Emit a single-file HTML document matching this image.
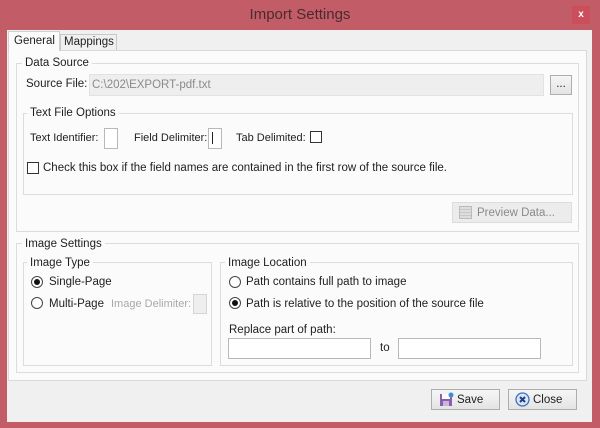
<!DOCTYPE html>
<html><head><style>
*{margin:0;padding:0;box-sizing:border-box}
body{width:600px;height:428px;background:#c25d68;font-family:"Liberation Sans",sans-serif;font-size:11.5px;color:#1e1e1e;position:relative;overflow:hidden}
.a{position:absolute}
.title{left:0;top:0;width:600px;height:30px;text-align:center;line-height:30px;font-size:15px;color:#4a2a2e}
.x{left:572px;top:6px;width:18px;height:18px;background:#cc4e5a;color:#fff;font-weight:bold;font-size:10px;text-align:center;line-height:18px}
.client{left:7px;top:30px;width:585px;height:392px;background:#f0f0f0}
.page{left:8px;top:50px;width:579px;height:331px;background:#fbfbfb;border:1px solid #d9d9d9}
.grp{border:1px solid #dcdcdc}
.lbl{background:#fbfbfb;padding:0 3px;white-space:nowrap}
.tb{background:#fff;border:1px solid #b8b8b8}
.btn{background:linear-gradient(#f6f6f6,#e4e4e4);border:1px solid #adadad;text-align:center}
.cb{width:12px;height:12px;border:1px solid #333;background:#fff}
.rd{width:12px;height:12px;border:1px solid #444;border-radius:50%;background:#fff}
.rd.on::after{content:"";position:absolute;left:2px;top:2px;width:6px;height:6px;border-radius:50%;background:#111}
.t{white-space:nowrap;line-height:14px}
.s{font-size:11px}
</style></head><body>
<div class="a title">Import Settings</div>
<div class="a x">x</div>
<div class="a client"></div>
<div class="a page"></div>
<div class="a" style="left:8px;top:31px;width:52px;height:20px;background:#fbfbfb;border:1px solid #d0d0d0;border-bottom:none"></div>
<div class="a t" style="left:14px;top:34px">General</div>
<div class="a" style="left:60px;top:34px;width:57px;height:16px;background:#f0f0f0;border:1px solid #c8c8c8;border-bottom:none"></div>
<div class="a t" style="left:64px;top:35px">Mappings</div>

<div class="a grp" style="left:16px;top:63px;width:563px;height:169px"></div>
<div class="a lbl t" style="left:22px;top:56px">Data Source</div>
<div class="a t" style="left:26px;top:77px">Source File:</div>
<div class="a" style="left:89px;top:74px;width:455px;height:22px;background:#eeeeee;border:1px solid #e2e2e2"></div>
<div class="a t" style="left:92px;top:78px;color:#8a8a8a">C:\202\EXPORT-pdf.txt</div>
<div class="a btn" style="left:550px;top:75px;width:22px;height:20px;line-height:16px">...</div>

<div class="a grp" style="left:23px;top:113px;width:550px;height:82px"></div>
<div class="a lbl t" style="left:27px;top:106px">Text File Options</div>
<div class="a t s" style="left:30px;top:131px">Text Identifier:</div>
<div class="a tb" style="left:104px;top:128px;width:14px;height:21px"></div>
<div class="a t s" style="left:134px;top:131px">Field Delimiter:</div>
<div class="a tb" style="left:208px;top:128px;width:14px;height:21px"></div>
<div class="a" style="left:212px;top:132px;width:1px;height:12px;background:#222"></div>
<div class="a t s" style="left:236px;top:131px">Tab Delimited:</div>
<div class="a cb" style="left:310px;top:131px"></div>
<div class="a cb" style="left:27px;top:162px"></div>
<div class="a t" style="left:43px;top:161px">Check this box if the field names are contained in the first row of the source file.</div>

<div class="a" style="left:452px;top:202px;width:120px;height:21px;background:#ececec;border:1px solid #dcdcdc"></div>
<div class="a" style="left:459px;top:206px;width:13px;height:13px;border:1px solid #bbb;background:repeating-linear-gradient(#ddd 0 2px,#c8c8c8 2px 3px)"></div>
<div class="a t" style="left:477px;top:206px;color:#8a8a8a">Preview Data...</div>

<div class="a grp" style="left:16px;top:243px;width:563px;height:130px"></div>
<div class="a lbl t" style="left:22px;top:237px">Image Settings</div>
<div class="a grp" style="left:23px;top:262px;width:189px;height:104px"></div>
<div class="a lbl t" style="left:27px;top:256px">Image Type</div>
<div class="a rd on" style="left:31px;top:276px"></div>
<div class="a t" style="left:49px;top:275px">Single-Page</div>
<div class="a rd" style="left:31px;top:297px"></div>
<div class="a t" style="left:49px;top:297px">Multi-Page</div>
<div class="a t s" style="left:111px;top:297px;color:#a8a8a8">Image Delimiter:</div>
<div class="a" style="left:193px;top:294px;width:14px;height:20px;background:#eee;border:1px solid #d6d6d6"></div>

<div class="a grp" style="left:220px;top:262px;width:353px;height:104px"></div>
<div class="a lbl t" style="left:225px;top:256px">Image Location</div>
<div class="a rd" style="left:229px;top:276px"></div>
<div class="a t" style="left:246px;top:275px">Path contains full path to image</div>
<div class="a rd on" style="left:229px;top:297px"></div>
<div class="a t" style="left:246px;top:297px">Path is relative to the position of the source file</div>
<div class="a t" style="left:229px;top:323px">Replace part of path:</div>
<div class="a tb" style="left:228px;top:338px;width:143px;height:21px"></div>
<div class="a t" style="left:380px;top:341px">to</div>
<div class="a tb" style="left:398px;top:338px;width:143px;height:21px"></div>

<div class="a btn" style="left:431px;top:389px;width:69px;height:21px"></div>
<svg class="a" style="left:439px;top:392px" width="15" height="15" viewBox="0 0 15 15"><rect x="1" y="2" width="12" height="12" fill="#8a5fb0"/><rect x="3" y="2" width="8" height="5" fill="#fff"/><rect x="4" y="9" width="6" height="5" fill="#c9b6dd"/><circle cx="12" cy="3" r="2.5" fill="#3a8fd8"/></svg>
<div class="a t" style="left:457px;top:393px">Save</div>
<div class="a btn" style="left:508px;top:389px;width:69px;height:21px"></div>
<svg class="a" style="left:515px;top:392px" width="15" height="15" viewBox="0 0 15 15"><circle cx="7.5" cy="7.5" r="6.5" fill="#d8e6f8" stroke="#3d6fc0" stroke-width="1.3"/><path d="M5 5L10 10M10 5L5 10" stroke="#1d3f8a" stroke-width="2"/></svg>
<div class="a t" style="left:533px;top:393px">Close</div>
</body></html>
